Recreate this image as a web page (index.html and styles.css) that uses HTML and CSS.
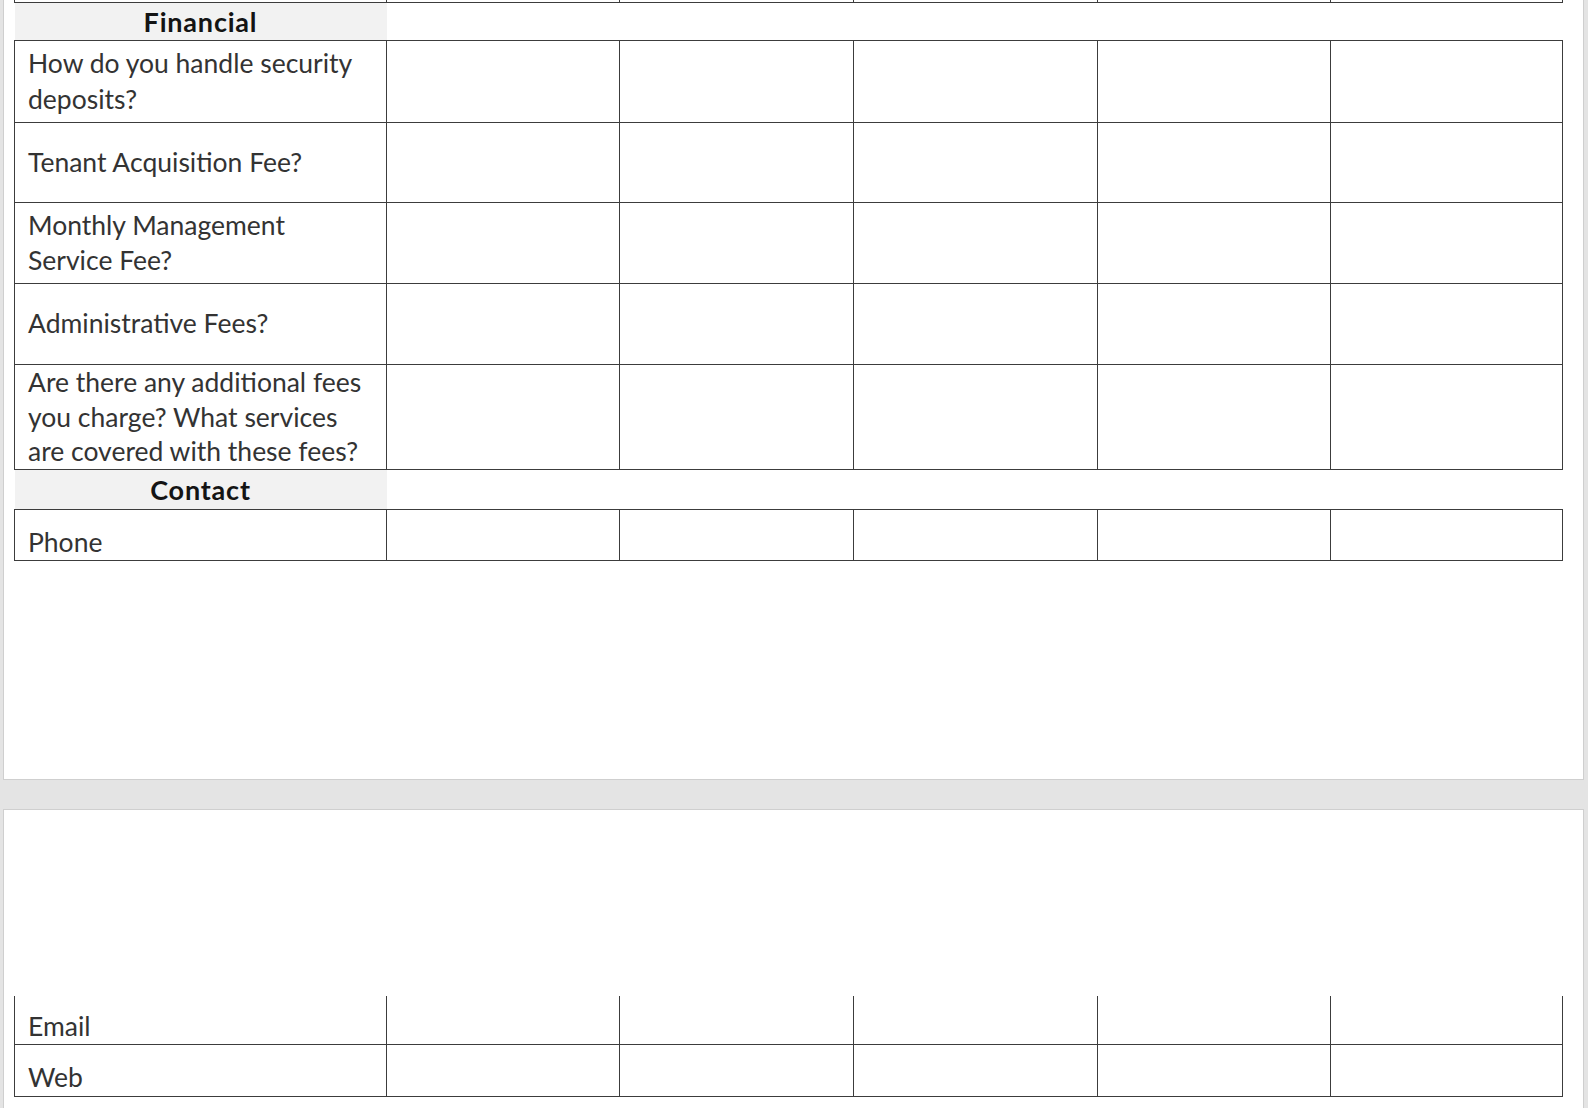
FILE: index.html
```html
<!DOCTYPE html>
<html lang="en">
<head>
<meta charset="utf-8">
<title>Property Management Comparison</title>
<link rel="stylesheet" href="styles.css">
</head>
<body>
<div class="viewer">
  <div class="page page-first">
    <table class="grid">
      <colgroup>
        <col class="c-q"><col class="c-a"><col class="c-b"><col class="c-c"><col class="c-d"><col class="c-e">
      </colgroup>
      <tbody>
        <tr class="r-stub"><td></td><td></td><td></td><td></td><td></td><td></td></tr>
        <tr class="r-head"><th class="sect">Financial</th><th class="blank" colspan="5"></th></tr>
        <tr class="r-82"><td class="q">How do you handle security deposits?</td><td></td><td></td><td></td><td></td><td></td></tr>
        <tr class="r-80"><td class="q">Tenant Acquisition Fee?</td><td></td><td></td><td></td><td></td><td></td></tr>
        <tr class="r-81"><td class="q">Monthly Management Service Fee?</td><td></td><td></td><td></td><td></td><td></td></tr>
        <tr class="r-81"><td class="q">Administrative Fees?</td><td></td><td></td><td></td><td></td><td></td></tr>
        <tr class="r-105"><td class="q q-tight">Are there any additional fees you charge? What services are covered with these fees?</td><td></td><td></td><td></td><td></td><td></td></tr>
        <tr class="r-head r-head2"><th class="sect">Contact</th><th class="blank" colspan="5"></th></tr>
        <tr class="r-51"><td class="q q-low">Phone</td><td></td><td></td><td></td><td></td><td></td></tr>
      </tbody>
    </table>
  </div>
  <div class="page page-second">
    <table class="grid grid-cont">
      <colgroup>
        <col class="c-q"><col class="c-a"><col class="c-b"><col class="c-c"><col class="c-d"><col class="c-e">
      </colgroup>
      <tbody>
        <tr class="r-49 r-open"><td class="q q-low">Email</td><td></td><td></td><td></td><td></td><td></td></tr>
        <tr class="r-53"><td class="q q-low q-web">Web</td><td></td><td></td><td></td><td></td><td></td></tr>
      </tbody>
    </table>
  </div>
</div>
</body>
</html>
```

FILE: styles.css
```css
html, body {
  margin: 0;
  padding: 0;
}

body {
  background: #e4e4e4;
  font-family: Lato, "Open Sans", "Liberation Sans", sans-serif;
  color: #333333;
  overflow: hidden;
}

.viewer {
  display: flex;
  flex-direction: column;
  gap: 29px;
  padding: 0 4px 0 3px;
}

.page {
  background: #ffffff;
  border: 1px solid #cfcfcf;
  box-sizing: border-box;
  padding-left: 10px;
}

.page-first {
  border-top: none;
  height: 780px;
}

.page-second {
  height: 400px;
  padding-top: 186px;
}

.grid {
  border-collapse: collapse;
  table-layout: fixed;
  width: 1548px;
}

.c-q { width: 372px; }
.c-a { width: 233px; }
.c-b { width: 234px; }
.c-c { width: 244px; }
.c-d { width: 233px; }
.c-e { width: 232px; }

.grid td {
  border: 1px solid #3c3c3c;
  padding: 0;
}

.r-stub td {
  height: 2px;
  border-top: none;
}

.r-head th {
  height: 37px;
  padding: 0;
  border: none;
}

.sect {
  background: #f2f2f2;
  font-weight: 700;
  font-size: 27px;
  letter-spacing: 0.8px;
  color: #141414;
  text-align: center;
  vertical-align: middle;
}

.blank {
  background: #ffffff;
}

.r-head2 th { height: 39px; }

.r-82 td { height: 81px; }
.r-80 td { height: 79px; }
.r-81 td { height: 80px; }
.r-105 td { height: 104px; }
.r-51 td { height: 50px; }
.r-49 td { height: 48px; }
.r-53 td { height: 50px; }

.r-open td { border-top: none; }

.q {
  font-size: 26.5px;
  line-height: 35.5px;
  padding: 0 10px 0 13px !important;
  vertical-align: middle;
  text-align: left;
}

.q-tight {
  line-height: 34.6px;
  vertical-align: bottom;
}

.q-low {
  vertical-align: bottom;
}

.q-web {
  padding-bottom: 1px !important;
}
```
